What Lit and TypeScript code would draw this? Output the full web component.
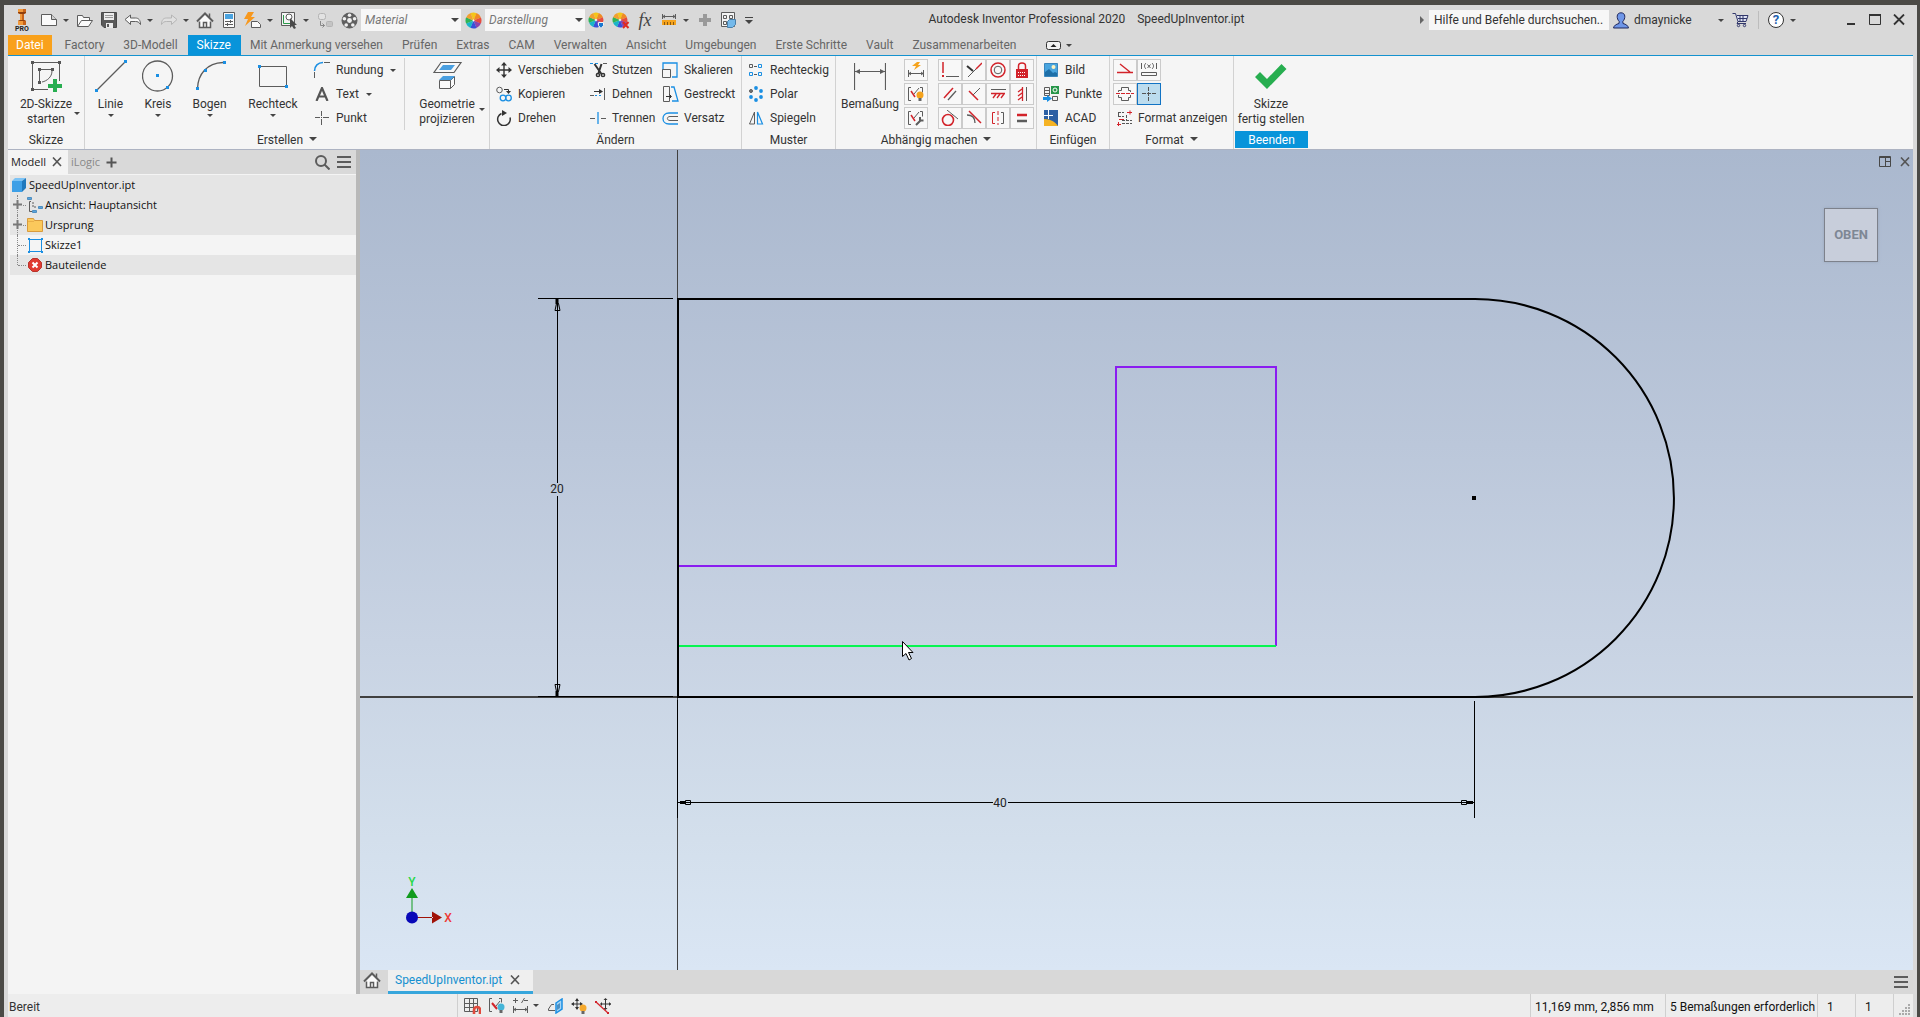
import { LitElement, html, svg, css, SVGTemplateResult, TemplateResult } from "lit";
import { customElement, property } from "lit/decorators.js";
import { classMap } from "lit/directives/class-map.js";

const icon = (w: number, h: number, body: SVGTemplateResult): TemplateResult =>
  html`<svg class="ic" width=${w} height=${h} viewBox="0 0 ${w} ${h}" fill="none" stroke="#5c5c5c" aria-hidden="true">${body}</svg>`;

const dot = (x: number, y: number, c = "#1a8fe3", r = 3) =>
  svg`<rect x=${x} y=${y} width=${r} height=${r} fill=${c} stroke="none"/>`;

const wheel = (cx: number, cy: number, r: number) => {
  const colors = ["#f5c518", "#f08a24", "#e84c3d", "#8e44ad", "#3a50d9", "#19b5c9", "#2fb457", "#f0a030"];
  const n = 8;
  return svg`${colors.map((c, i) => {
    const a = ((i - 2.5) * 2 * Math.PI) / n;
    const b = a + (2 * Math.PI) / n + 0.02;
    return svg`<path stroke="none" fill=${c} d="M${cx} ${cy}L${cx + r * Math.cos(a)} ${cy + r * Math.sin(a)}A${r} ${r} 0 0 1 ${cx + r * Math.cos(b)} ${cy + r * Math.sin(b)}Z"/>`;
  })}<circle cx=${cx} cy=${cy} r="1" fill="#fff" stroke="none"/>`;
};

const bulb = (x: number, y: number, c: string) =>
  svg`<circle cx=${x} cy=${y} r="3.5" fill=${c} stroke="none"/><path stroke="#666" stroke-width="3" d="M${x} ${y + 3}v3"/>`;

const ICONS: Record<string, TemplateResult> = {
  /* quick access */
  logo: html`<svg class="ic" width="16" height="16" viewBox="0 0 16 16" aria-hidden="true"><path fill="#c8641c" d="M4 0h8v4l-2 1v6l2 1v4H4v-4l2-1V5L4 4z"/><path fill="#f29a3c" d="M4 0h5v4l-1 1v6l1 1v4H4v-4l2-1V5L4 4z"/><path fill="#8f3f0c" d="M4 3h8v1l-2 1H6L4 4zM6 11h4l2 1H4z"/></svg>`,
  fresh: icon(18, 14, svg`<path fill="#fafafa" d="M1.500 1.500h10l5 5v6h-15z"/><path fill="#d0d0d0" d="M11.500 1.500v5h5"/>`),
  open: icon(18, 15, svg`<path fill="#fafafa" d="M1.500 13V2.500h5l1 2h6v3"/><path fill="#fafafa" d="M1.500 13.500l4-6h11l-4 6z"/>`),
  save: icon(16, 16, svg`<path fill="#5a5a5a" stroke="#4a4a4a" d="M.5.5h15v15H3L.5 13z"/><path fill="#ececec" stroke="none" d="M3 1h10v7H3zM5 11h7v5H5z"/><path stroke="#999" d="M4 3.500h8M4 5.500h8"/><path fill="#5a5a5a" stroke="none" d="M6 12h2v3H6z"/>`),
  undo: icon(18, 12, svg`<path fill="#f8f8f8" d="M1 5.500L6.500 1v3h5c3 0 5 2 5 6.500-1.500-2.500-3-3-5-3h-5v3z"/>`),
  redo: icon(18, 12, svg`<path fill="#e0e0e0" stroke="#b5b5b5" d="M17 5.500L11.500 1v3h-5c-3 0-5 2-5 6.500 1.500-2.500 3-3 5-3h5v3z"/>`),
  home: icon(18, 17, svg`<path fill="#fafafa" stroke-width="1.500" d="M3.500 7.500v8h11v-8"/><path fill="#fafafa" stroke-width="2" d="M1 9.500L9 1.500l8 8"/><path stroke-width="1.500" d="M13.500 1.500v4M7.500 15.500v-5h3v5"/>`),
  sheet: icon(14, 17, svg`<path fill="#fafafa" d="M1.500.5h11v15h-11z"/><path fill="#4aa3df" stroke="none" d="M3 2h8v5H3z"/><path d="M3 9.500h8M3 12.500h8M8.500 8v3M5.500 11v3"/>`),
  bolt: icon(18, 17, svg`<path fill="#f7981d" stroke="none" d="M4 0h6L7 5h4L1 14l3-7H0z"/><path fill="#fafafa" d="M7.500 9.500h6l3 3v3h-9z"/>`),
  pick: icon(18, 17, svg`<path fill="#f4f4f4" d="M1.500.5h13v13h-13z"/><path stroke="#2b9a4b" d="M3.500 3v8.500H10"/><circle cx="9" cy="5" r="3" fill="#fff"/><path fill="#4a4a4a" stroke="none" d="M10 6v10l2-2 2 3 2-1-2-3h3z"/>`),
  chain: icon(17, 17, svg`<g stroke="#b4b4b4"><rect x="1.500" y="1.500" width="7" height="6" rx="2" fill="#e2e2e2"/><rect x="9.500" y="9.500" width="6" height="5" rx="1" fill="#c4c4c4"/><path stroke="#888" d="M3.500 9v4.500h4M5.500 11.500l2 2-2 2"/></g>`),
  ball: icon(17, 17, svg`<circle cx="8.500" cy="8.500" r="7.500" fill="#606060"/><g stroke="none" fill="#f0f0f0"><circle cx="8.500" cy="8.500" r="2.400"/><circle cx="8.500" cy="3.200" r="1.800"/><circle cx="13.600" cy="6.800" r="1.800"/><circle cx="11.800" cy="13" r="1.800"/><circle cx="5.200" cy="13" r="1.800"/><circle cx="3.400" cy="6.800" r="1.800"/></g>`),
  wheel: icon(17, 17, wheel(8.5, 8.5, 8)),
  wheelPin: icon(18, 17, svg`${wheel(8, 8, 7.5)}<path fill="#1a78d0" stroke="#f0f0f0" d="M10.500 10.500h5v3l-2.500 3-2.500-3z"/>`),
  wheelX: icon(18, 17, svg`${wheel(8, 8, 7.5)}<path stroke="#e02a20" stroke-width="2" d="M11 10l5.500 6M16.500 10L11 16"/>`),
  ruler: icon(16, 13, svg`<path d="M1.500 0v5M14.500 0v5M2 2.500h12M4 1L2 2.500 4 4M12 1l2 1.500L12 4"/><path fill="#f5a31d" stroke="none" d="M1 6h14v5H1z"/><path stroke="#8a5a10" d="M3.500 8v3M6.500 8v3M9.500 8v3M12.500 8v3"/>`),
  plus: icon(14, 14, svg`<path stroke="#9a9a9a" stroke-width="4" d="M7 1v12M1 7h12"/>`),
  board: icon(18, 17, svg`<path fill="#f4f4f4" d="M1.500.5h13v14h-13z"/><path d="M3.500 3.500h3v3h-3zM9.500 3.500h3v3h-3zM3.500 9.500h3v3h-3z"/><path fill="#74b9ea" stroke="#4a7fa8" d="M7.500 9.500l2-2h6v5l-3 3h-5z"/>`),
  user: icon(16, 17, svg`<path fill="#6f96e8" stroke="#20285c" d="M8 .8c-5 0-4.500 6-1.800 8.700L6 11.500c-3 .8-5 2-5.500 4.500h15c-.5-2.500-2.500-3.700-5.500-4.500l-.2-2C12.500 6.800 13 .8 8 .8z"/>`),
  cart: icon(17, 16, svg`<g stroke="#31376b"><path fill="#dfe3f4" d="M.5 1.500h3l2.500 8h8l2-6H5"/><path d="M6 9.500l-1 2h9M6 6.500h9M8 4v5M11 4v5"/><circle cx="6.500" cy="13.500" r="1.200"/><circle cx="12.500" cy="13.500" r="1.200"/></g>`),
  /* window */
  min: icon(14, 14, svg`<path stroke="#333" stroke-width="2" d="M3 11h8"/>`),
  max: icon(14, 14, svg`<path stroke="#333" d="M1.500 1.500h11v10h-11z"/><path stroke="#333" stroke-width="2" d="M1 2h12"/>`),
  close: icon(12, 12, svg`<path stroke="#333" stroke-width="1.800" d="M1 .5l10 10M11 .5L1 10.500"/>`),
  closeS: icon(10, 10, svg`<path stroke="#555" stroke-width="1.600" d="M1 .5l8 8.500M9 .5L1 9"/>`),
  add: icon(11, 11, svg`<path stroke="#555" stroke-width="2" d="M5.500 .5v10M.5 5.500h10"/>`),
  lens: icon(15, 15, svg`<circle cx="6" cy="6" r="5" stroke-width="2"/><path stroke-width="2" d="M9.500 9.500l5 5"/>`),
  burger: icon(14, 12, svg`<path stroke-width="2" d="M0 1h14M0 6h14M0 11h14"/>`),
  layout: icon(12, 11, svg`<path stroke="#484848" d="M.5.500h11v10H.5zM6.500 1v9M7 5.500h4"/><path stroke="#484848" d="M0 1.500h12"/>`),
  collapse: icon(15, 9, svg`<rect x=".5" y=".5" width="14" height="8" rx="2" fill="#f2f2f2" stroke="#333"/><path fill="#222" stroke="none" d="M4.500 6h6l-3-3z"/>`),
  /* large sketch icons, 32px */
  sketch: icon(32, 32, svg`<path d="M2.500 4v25M3 2.500h26M29.500 4v17M4 29.500h14M9.500 11v11M11 9.500h10M22 11c0 6-5 10-10 11"/>${dot(1, 1, "#555")}${dot(28, 1, "#555")}${dot(1, 28, "#555")}${dot(8, 8, "#555")}${dot(21, 8, "#555")}${dot(8, 21, "#555")}<path stroke="#27ae50" stroke-width="4" d="M25 19v14M18 26h14"/>`),
  line: icon(32, 32, svg`<path stroke-width="1.300" d="M2 30L30 2"/>${dot(0, 29)}${dot(29, 0)}`),
  circle: icon(32, 32, svg`<circle cx="15.500" cy="16" r="15" stroke-width="1.300"/>${dot(14, 14)}${dot(24, 26)}`),
  arc: icon(32, 32, svg`<path stroke-width="1.300" d="M3.500 28.500C4 14 13 3 29 2.500"/>${dot(2, 27)}${dot(10, 9)}${dot(29, 1)}`),
  rect: icon(32, 32, svg`<path d="M2.500 6.500h27v20h-27z"/>${dot(1, 5)}${dot(28, 25)}`),
  geometry: icon(32, 32, svg`<path fill="#f8f8f8" stroke-width="1.200" d="M10 2.500h20l-7 10H3z"/><path fill="#4a9fe0" stroke="none" d="M12 5h12l-4 5H8z"/><path fill="#fafafa" d="M8.500 20.500h11v8h-11zM19.500 20.500l4-4v8l-4 4"/><path fill="#4a9fe0" stroke="none" d="M8 20l4-4h12l-4 4z"/>`),
  dimension: icon(32, 32, svg`<path stroke-width="1.200" d="M.5 3v27M31.500 3v27M1 11.500h30"/><path fill="#5c5c5c" stroke="none" d="M1 11.500l5-2.500v5zM31 11.500l-5-2.500v5z"/>`),
  check: icon(32, 32, svg`<path fill="#27ae50" stroke="none" d="M0 17l5-5 7 7L26.500 4l5 5L12 29z"/>`),
  /* small ribbon icons */
  fillet: icon(18, 18, svg`<path d="M1.500 17v-6M11 1.500h6"/><path stroke="#1a8fe3" stroke-width="1.500" d="M1.500 10C1.500 5 5 1.500 10 1.500"/>`),
  text: icon(14, 14, svg`<path stroke="#555" stroke-width="2.200" d="M1.500 14L7 1l5.500 13M3.500 9.500h7"/>`),
  point: icon(14, 14, svg`<path d="M0 6.500h5M8 6.500h6M6.500 0v5M6.500 8v6"/>${dot(6, 6, "#555", 1)}`),
  move: icon(16, 16, svg`<path stroke="#333" stroke-width="1.400" d="M8 2v12M2 8h12"/><path fill="#333" stroke="none" d="M8 0l3 3.500H5zM8 16l3-3.500H5zM0 8l3.500-3v6zM16 8l-3.500-3v6z"/>`),
  copy: icon(16, 16, svg`<circle cx="3.500" cy="4" r="2.800"/><path stroke="#333" d="M8 3.500h4.500V6"/><path fill="#333" stroke="none" d="M10 5h5l-2.500 3z"/><g stroke="#1a8fe3" stroke-width="1.300"><circle cx="7" cy="12" r="2.800"/><circle cx="12.500" cy="12" r="2.800"/></g>`),
  rotate: icon(16, 16, svg`<path stroke="#333" stroke-width="1.500" d="M5.500 3.500A6.300 6.300 0 1 0 14 7.500"/><path fill="#333" stroke="none" d="M6 0l5 3-5 3z"/>`),
  trim: icon(17, 16, svg`<path stroke="#1a8fe3" stroke-dasharray="3 2" d="M0 1.500h8"/><path d="M13 1.500h4"/><path stroke="#333" stroke-width="2" d="M4.500 2l7 10M11.500 2l-3 9"/><circle cx="8" cy="13" r="1.600" stroke="#333" stroke-width="1.500"/><circle cx="13" cy="13" r="1.600" stroke="#333" stroke-width="1.500"/>`),
  extend: icon(16, 14, svg`<path stroke="#333" d="M4 4.500h8"/><path fill="#333" stroke="none" d="M9 2l4 2.500L9 7z"/><path d="M0 8.500h4M14.500 1v12"/><path stroke="#1a8fe3" stroke-dasharray="2 2" d="M5 8.500h8"/>`),
  split: icon(16, 12, svg`<path d="M0 6.500h5M11 6.500h5"/><path stroke="#1a8fe3" stroke-width="1.300" d="M8 0v12"/>`),
  scale: icon(16, 16, svg`<path stroke="#1a8fe3" stroke-width="1.300" d="M1 8V1h14v14H10"/><path d="M.5 7.500h8v8h-8z"/>`),
  stretch: icon(17, 16, svg`<path d="M1.500.5h6v15h-6z"/><path stroke="#333" d="M4 10.500h5M7.500 8.500l2 2-2 2"/><path stroke="#1a8fe3" stroke-width="1.300" d="M9 1h3l4 14h-6"/>`),
  offset: icon(16, 13, svg`<path stroke="#1a8fe3" stroke-width="1.300" d="M16 1H7C-1 1-1 12 7 12h9"/><path d="M16 4.500H8c-3.500 0-3.500 4 0 4h8"/>`),
  rectangular: icon(14, 14, svg`<path d="M.5 1.500h3v3h-3zM5 3.500h3"/><path stroke="#1a8fe3" d="M9.500 1.500h3v3h-3zM.5 9.500h3v3h-3zM9.500 9.500h3v3h-3z"/><path d="M5 11.500h3"/>`),
  polar: icon(16, 16, svg`<g stroke="none" fill="#1a8fe3"><circle cx="8" cy="2" r="1.900"/><circle cx="13" cy="5" r="1.900"/><circle cx="13" cy="11" r="1.900"/><circle cx="8" cy="14" r="1.900"/><circle cx="3" cy="11" r="1.900"/></g><circle cx="3" cy="5" r="1.500" fill="#777"/>`),
  mirror: icon(16, 14, svg`<path d="M6.500 1v12h-5z"/><path stroke="#1a8fe3" stroke-width="1.200" d="M9.500 1v12h5z"/>`),
  image: icon(14, 14, svg`<path fill="#49a5df" stroke="#3a86bd" d="M.5.500h13v13H.5z"/><circle cx="9.500" cy="4" r="2" fill="#fff3c0" stroke="none"/><path fill="#1d6fa8" stroke="none" d="M1 13V9l4-3 4 4 2-1 2 1v3z"/>`),
  points: icon(16, 16, svg`<path fill="#f4f4f4" d="M1.500 1.500h5v8h-5zM2 4.500h4M2 7.500h4M9.500 10.500h5v4h-5z"/><path fill="#27964a" stroke="none" d="M8 0h8v8H8z"/><circle cx="12" cy="4" r="2" stroke="#fff"/><path fill="#1a8fe3" stroke="none" d="M0 11h4V9l5 3.500L4 16v-2H0z"/>`),
  acad: icon(14, 16, svg`<path fill="#2c5fa3" stroke="none" d="M0 0h14v16H0z"/><path fill="#f5b324" stroke="none" d="M0 9c7 0 11 3 14 7H0z"/><path stroke="#fff" d="M4.500 0v9M0 5.500h9"/>`),
  showFormat: icon(16, 16, svg`<path stroke="#555" stroke-dasharray="3 1" d="M1 2.500h6M1 6.500h6M5 10.500h10M5 13.500h10M9.500 5v5M1.500 3v4"/><path stroke="#d2232a" d="M10 2.500h5M13 .5v4M0 14.500h4M1.500 12v4M2 9.500h5"/>`),
  /* bordered tool icons */
  autoDim: icon(18, 16, svg`<path d="M1.500 8v7M16.500 8v7M2 11.500h14M4 10l-2 1.500L4 13M14 10l2 1.500-2 1.500"/><path fill="#f5a31d" stroke="none" d="M10 0h3l-2 3h3l-7 5 2-4H5z"/>`),
  relShow: icon(18, 16, svg`<path d="M4 1.500H1.500v13H4M13 1.500h2.500v5"/><path stroke="#d2232a" stroke-width="1.500" d="M4 5l4 6"/><path d="M7 8l5-6"/>${bulb(13, 9, "#f5a31d")}`),
  relSet: icon(18, 16, svg`<path d="M4 1.500H1.500v13H4M13 1.500h2.500v5"/><path stroke="#d2232a" stroke-width="1.500" d="M4 5l4 6"/><path d="M7 8l5-6"/><path stroke-width="2" d="M9 15l5-5M13 7v3.500h3.500"/>`),
  coincident: icon(18, 16, svg`<path stroke="#d2232a" stroke-width="1.500" d="M2 0v11"/><path d="M5 14.500h13"/>${dot(1, 13, "#d2232a", 2)}`),
  collinear: icon(16, 16, svg`<path stroke="#333" stroke-width="2" d="M1 4l6 5"/><path d="M2 15l8-8"/><path stroke="#d2232a" stroke-width="1.500" d="M10 7l6-6"/>`),
  concentric: icon(16, 16, svg`<circle cx="8" cy="8" r="7" stroke="#d2232a" stroke-width="1.500"/><circle cx="8" cy="8" r="3.800"/>`),
  fix: icon(14, 16, svg`<path stroke="#d2232a" stroke-width="1.500" d="M3.500 7V4c0-4 7-4 7 0v3"/><path fill="#d2232a" stroke="none" d="M1 7h12v9H1z"/><path stroke="#fff" stroke-dasharray="1 1" d="M3 10.500h8M3 13.500h8"/>`),
  parallel: icon(14, 14, svg`<path stroke="#d2232a" stroke-width="1.500" d="M1 11l9-10"/><path stroke-width="1.300" d="M5 13l8-9"/>`),
  perpendicular: icon(14, 14, svg`<path stroke="#d2232a" stroke-width="1.500" d="M2 4l9 9"/><path d="M6 8l7-7"/>`),
  horizontal: icon(16, 12, svg`<path d="M1 1.500h15"/><path stroke="#d2232a" stroke-width="1.300" d="M1 5.500h14M6 6l-3 4M10 6l-3 4M14 6l-3 4"/>`),
  vertical: icon(12, 16, svg`<path d="M10.500 1v14"/><path stroke="#d2232a" stroke-width="1.300" d="M6.500 1v14M6 3L2 6M6 7l-4 3M6 11l-4 3"/>`),
  tangent: icon(18, 16, svg`<circle cx="7" cy="10" r="5.500" stroke="#d2232a" stroke-width="1.600"/><path d="M6 0l11 9"/>`),
  smooth: icon(18, 16, svg`<path stroke="#d2232a" stroke-width="1.500" d="M4 1l12 12"/><path stroke-width="1.300" d="M2 5c6 0 8 3 8 8"/>`),
  symmetric: icon(14, 14, svg`<path stroke="#d2232a" d="M4 1.500H1.500v11H4"/><path d="M10 1.500h2.500v11H10"/><path stroke="#d2232a" stroke-dasharray="4 2" d="M7 0v14"/>`),
  equal: icon(14, 14, svg`<path stroke="#d2232a" stroke-width="2.500" d="M2 4h10"/><path stroke-width="2.500" d="M2 10h10"/>`),
  construct: icon(18, 14, svg`<path stroke="#d2232a" stroke-width="1.400" d="M1 9.500h16M4 1l10 8"/>`),
  driven: icon(18, 16, svg`<path d="M1.500 1v6M16.500 1v6M1.500 10.500h15v3h-15zM6 1c-2 2-2 4 0 6M12 1c2 2 2 4 0 6M7.500 2.500l3 3.500M10.500 2.500l-3 3.500"/>`),
  centerline: icon(18, 16, svg`<path d="M2.500 6V4.500h3v-3h7v3h2V6M2.500 9v2.500h3v3h7v-3h2V9"/><path stroke="#d2232a" stroke-dasharray="4 1" d="M0 7.500h18"/>`),
  centerpoint: icon(14, 14, svg`<path stroke="#555" stroke-dasharray="4 1" d="M0 6.500h14M6.500 0v14"/>`),
  /* browser tree */
  part: icon(14, 14, svg`<path fill="#3d9fe6" stroke="none" d="M0 3h10v11H0z"/><path fill="#7cc3f5" stroke="none" d="M0 3l3-3h11l-4 3z"/><path fill="#2079bd" stroke="none" d="M10 3l4-3v10l-4 4z"/>`),
  view: icon(16, 16, svg`<g fill="#5aa5de" stroke="#3a80b8" stroke-width=".8"><path d="M.5.500h4v2h-4zM11.500 9.500h4v2h-4zM5.500 13.500h4v2h-4z"/></g><path d="M4 4.500H2.500v10H5" /><path stroke-dasharray="2 1" d="M6 5v5h4"/>`),
  folder: icon(16, 14, svg`<path fill="#fbc95c" stroke="#d99b3c" d="M.5.500h6l1 2h8v11H.5z"/><path stroke="#e9b04a" d="M1 3.500h6"/>`),
  skizze: icon(15, 15, svg`<path stroke="#1a8fe3" d="M1.500 1.500h12v12h-12z"/>${dot(0, 0, "#1a8fe3", 2)}${dot(13, 0, "#1a8fe3", 2)}${dot(0, 13, "#1a8fe3", 2)}${dot(13, 13, "#1a8fe3", 2)}`),
  end: icon(14, 14, svg`<path fill="#e03a30" stroke="#b8352c" d="M4.500.500h5l4 4v5l-4 4h-5l-4-4v-5z"/><path stroke="#fff" stroke-width="2" d="M4.500 4.500l5 5M9.500 4.500l-5 5"/>`),
  expander: icon(9, 9, svg`<path stroke="#777" stroke-width="2" d="M4.500 0v9M0 4.500h9"/>`),
  /* status bar */
  gridSnap: icon(17, 16, svg`<path d="M.5.500h13v13H.5zM5.500 0v14M9.500 0v14M0 5.500h14M0 9.500h14"/><path stroke="#e04a3c" stroke-width="2.600" d="M10 16v-4c0-4 6-4 6 0v4"/>`),
  relStat: icon(17, 16, svg`<path d="M4 .5H1.500v13H4M11 .5h2.500v4"/><path stroke="#d2232a" stroke-width="2" d="M4 5l5 6"/><path d="M8 8l4-5"/>${bulb(13, 9, "#45b5d8")}`),
  tolerance: icon(17, 16, svg`<path d="M1 2.500h5M3.500 0v5M9.500 5l3-5M12 2.500h4M1.500 8v7M15.500 8v7M2 11.500h13M4 10l-2 1.500L4 13M13 10l2 1.500-2 1.500"/>`),
  slice: icon(17, 16, svg`<path d="M7 6.500H4.500L1.500 11v1.500H8"/><path fill="#a5d4f5" stroke="#1a8fe3" stroke-width="1.500" d="M9 5l6-4v10l-6 4z"/><path fill="#4d8fc0" stroke="none" d="M10 7l3-2v5l-3 2z"/>`),
  freedom: icon(17, 16, svg`<path stroke="#333" d="M6 1v10M1 6h10"/><path fill="#333" stroke="none" d="M6 0l2 3H4zM6 12l2-3H4zM0 6l3-2v4zM12 6L9 4v4z"/>${bulb(12, 10, "#f5a92d")}`),
  relax: icon(17, 16, svg`<path stroke="#333" d="M10.500 1v10M6 6h10"/><path fill="#333" stroke="none" d="M10.500 0l2 2h-4zM10.500 12l2-2h-4zM5 6l2-2v4zM16 6l-2-2v4z"/><path stroke="#d2232a" stroke-width="1.300" d="M1 4l12 11"/>${dot(0, 3, "#d2232a", 2)}${dot(12, 14, "#d2232a", 2)}`),
  grip: icon(12, 12, svg`<g fill="#aaa" stroke="none"><path d="M9 0h2v2H9zM9 3h2v2H9zM9 6h2v2H9zM9 9h2v2H9zM6 3h2v2H6zM6 6h2v2H6zM6 9h2v2H6zM3 6h2v2H3zM3 9h2v2H3zM0 9h2v2H0z"/></g>`),
};

const base = css`
  :host { display: block; font-family: Roboto, "Noto Sans", sans-serif; font-size: 12px; line-height: 16px; color: #333; }
  *, *::before, *::after { box-sizing: border-box; }
  button, select, input { font: inherit; color: inherit; border: 0; background: none; padding: 0; margin: 0; border-radius: 0; white-space: nowrap; }
  .ic { display: block; flex: none; }
  .caret { display: block; flex: none; width: 0; height: 0; border: 3px solid transparent; border-top-color: #444; border-bottom-width: 0; }
  .caret.big { border-width: 4px; border-bottom-width: 0; }
  .tool { display: flex; align-items: center; justify-content: center; flex: none; }
`;

@customElement("title-bar")
class TitleBar extends LitElement {
  static styles = [base, css`
    .bar { display: flex; align-items: center; height: 30px; padding: 0 2px; background: #d9d9d9; }
    .quick, .right { display: flex; align-items: center; flex: none; }
    .tool { width: 24px; height: 28px; }
    .tool.drop { width: 10px; margin-right: 2px; }
    .logo { flex-direction: column; margin-right: 3px; font-size: 7px; line-height: 6px; font-weight: 700; color: #222; gap: 1px; }
    .fx { font: italic 18px "Liberation Serif", serif; color: #444; }
    .combo { position: relative; width: 100px; height: 22px; }
    .combo select { appearance: none; width: 100%; height: 100%; padding: 0 18px 0 4px; background: #f7f7f7; font-style: italic; color: #777; }
    .combo .caret { position: absolute; right: 2px; top: 9px; pointer-events: none; }
    .title { flex: 1; display: flex; justify-content: center; gap: 12px; padding: 0 4px 2px 0; white-space: nowrap; }
    .menu { flex-direction: column; gap: 2px; }
    .tool.menu { width: 16px; }
    .menu::before { content: ""; width: 8px; height: 1px; background: #444; }
    .arrow { width: 0; height: 0; border: 4px solid transparent; border-left-color: #666; border-right-width: 0; margin-right: 5px; }
    .search { width: 180px; height: 20px; padding: 0 5px; background: #f7f7f7; color: #333; }
    .search::placeholder { color: #333; opacity: 1; }
    .user { display: flex; align-items: center; gap: 5px; width: 103px; margin-left: 4px; }
    .sep { width: 1px; height: 18px; background: #bdbdbd; margin: 0 5px 0 6px; }
    .help span { width: 16px; height: 16px; border: 1px solid #333; border-radius: 50%; background: #fff; color: #1f5fae; font-weight: 700; font-size: 13px; line-height: 14px; }
    .first { margin-left: 39px; }
  `];
  private tool(name: string, label: string) {
    return html`<button class="tool" aria-label=${label}>${ICONS[name]}</button>`;
  }
  private drop(label: string) {
    return html`<button class="tool drop" aria-label=${label}><span class="caret"></span></button>`;
  }
  render() {
    return html`<header class="bar">
      <div class="quick">
        <button class="tool logo" aria-label="Anwendungsmenü">${ICONS.logo}<span>PRO</span></button>
        ${this.tool("fresh", "Neu")}${this.drop("Neu Optionen")}
        ${this.tool("open", "Öffnen")}${this.tool("save", "Speichern")}
        ${this.tool("undo", "Rückgängig")}${this.drop("Rückgängig Liste")}
        ${this.tool("redo", "Wiederherstellen")}${this.drop("Wiederherstellen Liste")}
        ${this.tool("home", "Startseite")}${this.tool("sheet", "iProperties")}
        ${this.tool("bolt", "Aktualisieren")}${this.drop("Aktualisieren Optionen")}
        ${this.tool("pick", "Auswahl")}${this.drop("Auswahl Optionen")}
        ${this.tool("chain", "Verknüpfung")}${this.tool("ball", "Materialbrowser")}
        <label class="combo"><select aria-label="Material"><option>Material</option></select><span class="caret big"></span></label>
        ${this.tool("wheel", "Farbrad")}
        <label class="combo"><select aria-label="Darstellung"><option>Darstellung</option></select><span class="caret big"></span></label>
        ${this.tool("wheelPin", "Anpassen")}${this.tool("wheelX", "Löschen")}
        <button class="tool fx" aria-label="Parameter">fx</button>
        ${this.tool("ruler", "Messen")}${this.drop("Messen Optionen")}
        ${this.tool("plus", "Hinzufügen")}${this.tool("board", "Katalog")}
        <button class="tool menu" aria-label="Schnellzugriff anpassen"><span class="caret big"></span></button>
      </div>
      <div class="title"><span>Autodesk Inventor Professional 2020</span><span>SpeedUpInventor.ipt</span></div>
      <div class="right">
        <span class="arrow"></span>
        <input class="search" aria-label="Suche" placeholder="Hilfe und Befehle durchsuchen.." />
        <button class="user">${ICONS.user}<span>dmaynicke</span></button>
        ${this.drop("Konto")}
        ${this.tool("cart", "App Store")}
        <span class="sep"></span>
        <button class="tool help" aria-label="Hilfe"><span>?</span></button>
        ${this.drop("Hilfe Optionen")}
        <button class="tool first" aria-label="Minimieren">${ICONS.min}</button>
        <button class="tool" aria-label="Maximieren">${ICONS.max}</button>
        <button class="tool" aria-label="Schließen">${ICONS.close}</button>
      </div>
    </header>`;
  }
}

@customElement("ribbon-tabs")
class RibbonTabs extends LitElement {
  static styles = [base, css`
    .tabs { display: flex; align-items: stretch; height: 21px; background: #d9d9d9; border-bottom: 1px solid #1492cf; }
    .tab { padding: 0 10px 0 9px; color: #666; line-height: 20px; }
    .file { padding: 0 8px; margin-right: 4px; background: #f9a11b; color: #fff; }
    .active { background: #0894da; color: #fff; }
    .tool { gap: 5px; margin-left: 20px; }
  `];
  render() {
    const tabs = ["Datei", "Factory", "3D-Modell", "Skizze", "Mit Anmerkung versehen", "Prüfen", "Extras", "CAM", "Verwalten", "Ansicht", "Umgebungen", "Erste Schritte", "Vault", "Zusammenarbeiten"];
    return html`<nav class="tabs" role="tablist">
      ${tabs.map((t) => html`<button role="tab" aria-selected=${t === "Skizze"} class=${classMap({ tab: true, file: t === "Datei", active: t === "Skizze" })}>${t}</button>`)}
      <button class="tool" aria-label="Ribbon minimieren">${ICONS.collapse}<span class="caret"></span></button>
    </nav>`;
  }
}

@customElement("ribbon-panel")
class RibbonPanel extends LitElement {
  static styles = [base, css`
    .ribbon { display: flex; height: 94px; background: #f5f5f5; border-bottom: 1px solid #adb3c2; }
    .group { display: flex; flex-direction: column; flex: none; border-right: 1px solid #d2d2d2; }
    .group:last-child { border-right: 0; }
    .body { display: flex; flex: 1; padding-top: 2px; }
    .name { display: flex; align-items: center; justify-content: center; gap: 6px; height: 17px; margin-bottom: 1px; }
    .w1 { width: 77px; } .w2 { width: 405px; } .w3 { width: 252px; } .w4 { width: 94px; }
    .w5 { width: 201px; } .w6 { width: 73px; } .w7 { width: 124px; } .w8 { width: 75px; }
    .w2 .body { padding-left: 1px; }
    .w8 .name { background: #0894da; color: #fff; margin-left: 1px; margin-right: 1px; }
    .big { display: flex; flex-direction: column; align-items: center; padding-top: 2px; flex: none; line-height: 15px; }
    .big .label { margin-top: 5px; }
    .big .caret { margin-top: 2px; }
    .two { position: relative; }
    .two .caret { position: absolute; right: 4px; bottom: 16px; }
    .b77 { width: 76px; } .b49 { width: 49px; } .b46 { width: 46px; } .b57 { width: 57px; } .b70 { width: 70px; }
    .b83 { width: 84px; } .b74 { width: 74px; } .b68 { width: 68px; }
    .col { display: flex; flex-direction: column; flex: none; }
    .geo { margin-left: auto; border-left: 1px solid #d2d2d2; height: 72px; }
    .row { display: flex; align-items: center; gap: 4px; height: 24px; padding-left: 4px; }
    .row .slot { display: flex; justify-content: center; width: 20px; flex: none; }
    .row .caret { margin-left: 3px; }
    .c95 { width: 94px; } .c72 { width: 72px; }
    .grid { display: grid; grid-auto-rows: 22px; row-gap: 2px; padding-top: 1px; }
    .grid button { display: flex; align-items: center; justify-content: center; border: 1px solid #cbcbcb; background: #f8f8f8; }
    .g1 { grid-template-columns: 24px; margin-right: 10px; }
    .g2 { grid-template-columns: repeat(2, 24px); padding-left: 3px; }
    .g4 { grid-template-columns: repeat(4, 24px); }
    .grid button.on { background: #bcdcee; border-color: #1173c4; }
    .wide { padding-left: 5px; gap: 3px; margin-top: 1px; }
  `];
  private big(cls: string, name: string, label: string, caret = true) {
    return html`<button class="big ${cls}">${ICONS[name]}<span class="label">${label}</span>${caret ? html`<span class="caret"></span>` : null}</button>`;
  }
  private big2(cls: string, name: string, a: string, b: string, caret = true) {
    return html`<button class="big two ${cls}">${ICONS[name]}<span class="label">${a}<br />${b}</span>${caret ? html`<span class="caret"></span>` : null}</button>`;
  }
  private row(name: string, label: string, caret = false) {
    return html`<button class="row"><span class="slot">${ICONS[name]}</span><span>${label}</span>${caret ? html`<span class="caret"></span>` : null}</button>`;
  }
  private name(label: string, caret = false) {
    return html`<div class="name"><span>${label}</span>${caret ? html`<span class="caret big"></span>` : null}</div>`;
  }
  private cells(list: [string, string][], on = "") {
    return list.map(([n, l]) => html`<button aria-label=${l} class=${classMap({ on: n === on })}>${ICONS[n]}</button>`);
  }
  render() {
    return html`<div class="ribbon">
      <section class="group w1"><div class="body">${this.big2("b77", "sketch", "2D-Skizze", "starten")}</div>${this.name("Skizze")}</section>
      <section class="group w2"><div class="body">
        ${this.big("b49", "line", "Linie")}${this.big("b46", "circle", "Kreis")}${this.big("b57", "arc", "Bogen")}${this.big("b70", "rect", "Rechteck")}
        <div class="col">${this.row("fillet", "Rundung", true)}${this.row("text", "Text", true)}${this.row("point", "Punkt")}</div>
        <div class="geo">${this.big2("b83", "geometry", "Geometrie", "projizieren")}</div>
      </div>${this.name("Erstellen", true)}</section>
      <section class="group w3"><div class="body">
        <div class="col c95">${this.row("move", "Verschieben")}${this.row("copy", "Kopieren")}${this.row("rotate", "Drehen")}</div>
        <div class="col c72">${this.row("trim", "Stutzen")}${this.row("extend", "Dehnen")}${this.row("split", "Trennen")}</div>
        <div class="col">${this.row("scale", "Skalieren")}${this.row("stretch", "Gestreckt")}${this.row("offset", "Versatz")}</div>
      </div>${this.name("Ändern")}</section>
      <section class="group w4"><div class="body">
        <div class="col">${this.row("rectangular", "Rechteckig")}${this.row("polar", "Polar")}${this.row("mirror", "Spiegeln")}</div>
      </div>${this.name("Muster")}</section>
      <section class="group w5"><div class="body">
        ${this.big("b68", "dimension", "Bemaßung", false)}
        <div class="grid g1">${this.cells([["autoDim", "Automatische Bemaßung"], ["relShow", "Abhängigkeiten anzeigen"], ["relSet", "Abhängigkeitseinstellungen"]])}</div>
        <div class="grid g4">${this.cells([
          ["coincident", "Koinzident"], ["collinear", "Kollinear"], ["concentric", "Konzentrisch"], ["fix", "Fest"],
          ["parallel", "Parallel"], ["perpendicular", "Lotrecht"], ["horizontal", "Horizontal"], ["vertical", "Vertikal"],
          ["tangent", "Tangential"], ["smooth", "Stetig"], ["symmetric", "Symmetrisch"], ["equal", "Gleich"],
        ])}</div>
      </div>${this.name("Abhängig machen", true)}</section>
      <section class="group w6"><div class="body">
        <div class="col">${this.row("image", "Bild")}${this.row("points", "Punkte")}${this.row("acad", "ACAD")}</div>
      </div>${this.name("Einfügen")}</section>
      <section class="group w7"><div class="body"><div class="col">
        <div class="grid g2">${this.cells([["construct", "Konstruktion"], ["driven", "Getriebene Bemaßung"], ["centerline", "Mittellinie"], ["centerpoint", "Mittelpunkt"]], "centerpoint")}</div>
        <button class="row wide"><span class="slot">${ICONS.showFormat}</span><span>Format anzeigen</span></button>
      </div></div>${this.name("Format", true)}</section>
      <section class="group w8"><div class="body">${this.big2("b74", "check", "Skizze", "fertig stellen", false)}</div>${this.name("Beenden")}</section>
    </div>`;
  }
}

@customElement("model-browser")
class ModelBrowser extends LitElement {
  static styles = [base, css`
    :host { background: #f4f4f4; color: #111; font-family: "Open Sans", "Noto Sans", sans-serif; font-size: 11px; }
    .strip { display: flex; align-items: stretch; height: 24px; background: #d9d9d9; }
    .tab { display: flex; align-items: center; gap: 6px; padding: 0 6px 0 3px; background: #f4f4f4; color: #222; }
    .off { background: none; color: #888; padding: 0 0 0 3px; }
    .strip .tool { width: 22px; }
    .tail { margin-left: auto; padding-right: 5px; display: flex; gap: 7px; align-items: center; }
    ul { list-style: none; margin: 1px 0 0 2px; padding: 0; }
    li { display: flex; align-items: center; height: 20px; background: #e5e5e5; }
    li.light { background: none; }
    .root { padding-left: 2px; gap: 3px; }
    .twig { width: 16px; height: 20px; flex: none; position: relative; }
    .twig::before { content: ""; position: absolute; left: 7px; top: 0; height: 20px; border-left: 1px dotted #888; }
    .twig::after { content: ""; position: absolute; left: 8px; top: 10px; width: 8px; border-top: 1px dotted #888; }
    .last .twig::before { height: 10px; }
    .twig .ic { position: absolute; left: 3px; top: 5px; z-index: 1; background: #e5e5e5; }
    .slot { display: flex; justify-content: center; width: 18px; flex: none; }
    .kid span:last-child { padding-left: 1px; }
  `];
  render() {
    const kids: [string, string, boolean][] = [["view", "Ansicht: Hauptansicht", true], ["folder", "Ursprung", true], ["skizze", "Skizze1", false], ["end", "Bauteilende", false]];
    return html`<div class="strip">
        <button class="tab"><span>Modell</span>${ICONS.closeS}</button>
        <button class="tab off"><span>iLogic</span></button>
        <button class="tool" aria-label="Browser hinzufügen">${ICONS.add}</button>
        <div class="tail"><button aria-label="Suchen">${ICONS.lens}</button><button aria-label="Menü">${ICONS.burger}</button></div>
      </div>
      <ul role="tree">
        <li class="root" role="treeitem">${ICONS.part}<span>SpeedUpInventor.ipt</span></li>
        ${kids.map(([i, t, open], n) => html`<li role="treeitem" class=${classMap({ kid: true, light: i === "skizze", last: n === kids.length - 1 })}>
          <span class="twig">${open ? ICONS.expander : null}</span><span class="slot">${ICONS[i]}</span><span>${t}</span></li>`)}
      </ul>`;
  }
}

@customElement("sketch-canvas")
class SketchCanvas extends LitElement {
  static styles = [base, css`
    :host { position: relative; overflow: hidden; background: linear-gradient(#aab8ce, #bbc7da 36%, #c8d3e3 60%, #d3dfec 84%, #dae6f4); }
    .view { position: absolute; inset: 0; width: 100%; height: 100%; overflow: visible; }
    .dim { font-size: 12px; fill: #222; stroke: none; text-anchor: middle; }
    .axis { font-size: 12px; font-weight: 500; stroke: none; text-anchor: middle; }
    .tools { position: absolute; top: 6px; right: 3px; display: flex; align-items: center; gap: 9px; }
    .cube { position: absolute; top: 58px; right: 35px; width: 54px; height: 54px; background: #c8cedb; border: 1px solid #7d818b; color: #7e8794; font-weight: 700; font-size: 13px; text-align: center; box-shadow: 0 0 3px #9aa7bb; }
  `];
  render() {
    return html`<svg class="view" viewBox="360 150 1553 820" fill="none" stroke="#000" role="img" aria-label="Skizze1">
        <g stroke="#404040"><path d="M677.500 -2000V4000"/><path stroke-width="2" d="M-3000 697H5000"/></g>
        <path d="M538 298.500H673M538 696.500H673M557.500 299V483M557.500 496V697M677.500 700V818M1474.500 701V818M678 802.500H993M1008 802.500H1474"/>
        <g><path stroke-width="3" d="M557 299v5M557 691v5M680 802.500h6M1467 802.500h6"/>
        <path d="M556.500 303.500h2l1.500 7h-5zM556.500 691.500h2l1.500-7h-5zM685.500 800.500h5v4h-5zM1461.500 800.500h5v4h-5z"/></g>
        <path stroke-width="2" d="M1475 299H678V697H1475A199 199 0 0 0 1475 299Z"/>
        <path fill="#000" stroke="none" d="M1472 496h4v4h-4z"/>
        <path stroke="#8a1cf0" stroke-width="2" d="M679 566H1116V367H1276V646"/>
        <path stroke="#06f550" stroke-width="2" d="M679 646H1276"/>
        <text class="dim" x="557" y="493">20</text><text class="dim" x="1000" y="807">40</text>
        <path fill="#fff" d="M902.500 641.500v15l3.500-3 3 6.500 2.500-1.500-3-6h4.500z"/>
        <g stroke="none"><path fill="#119b1e" d="M412 888l6 10h-12zM411.500 897h1v16h-1z"/><path fill="#a01208" d="M442 917.500l-10-6v12zM416 917h17v1h-17z"/><circle cx="412" cy="917.500" r="6" fill="#0808b8"/></g>
        <text class="axis" x="412" y="886" fill="#28d848">Y</text><text class="axis" x="448" y="922" fill="#ee3a34">X</text>
      </svg>
      <div class="tools"><button aria-label="Anordnen">${ICONS.layout}</button><button aria-label="Dokument schließen">${ICONS.closeS}</button></div>
      <button class="cube">OBEN</button>`;
  }
}

@customElement("status-line")
class StatusLine extends LitElement {
  @property() message = "";
  static styles = [base, css`
    .bar { display: flex; align-items: stretch; height: 23px; background: #ededed; color: #111; }
    .msg { width: 449px; padding: 5px 0 0 1px; color: #333; flex: none; }
    .tools { display: flex; align-items: center; padding-left: 2px; border-left: 1px solid #cfcfcf; }
    .tool { width: 24px; }
    .tool.drop { width: 8px; margin-right: 3px; }
    .cells { display: flex; margin-left: auto; }
    .cell { padding: 5px 0 0 4px; border-left: 1px solid #cfcfcf; white-space: nowrap; }
    .pos { width: 135px; } .need { width: 152px; } .num { width: 38px; padding-left: 9px; }
    .grip { width: 20px; display: flex; align-items: flex-end; justify-content: flex-end; padding: 0 2px 1px 0; }
  `];
  render() {
    return html`<footer class="bar">
      <div class="msg">${this.message}</div>
      <div class="tools">
        <button class="tool" aria-label="Raster fangen">${ICONS.gridSnap}</button>
        <button class="tool" aria-label="Abhängigkeiten">${ICONS.relStat}</button>
        <button class="tool" aria-label="Toleranz">${ICONS.tolerance}</button>
        <button class="tool drop" aria-label="Toleranz Optionen"><span class="caret"></span></button>
        <button class="tool" aria-label="Schnitt">${ICONS.slice}</button>
        <button class="tool" aria-label="Freiheitsgrade">${ICONS.freedom}</button>
        <button class="tool" aria-label="Lockerungsmodus">${ICONS.relax}</button>
      </div>
      <div class="cells">
        <div class="cell pos">11,169 mm, 2,856 mm</div><div class="cell need">5 Bemaßungen erforderlich</div>
        <div class="cell num">1</div><div class="cell num">1</div>
        <div class="cell grip">${ICONS.grip}</div>
      </div>
    </footer>`;
  }
}

@customElement("app-root")
class AppRoot extends LitElement {
  static styles = [base, css`
    .window { display: flex; flex-direction: column; height: 100vh; border: solid #4b4a46; border-width: 5px 3px 0 4px; background: #d9d9d9; padding: 0 4px; overflow: hidden; }
    .work { display: flex; flex: 1; min-height: 0; }
    .side { flex: none; width: 348px; }
    .split { flex: none; width: 4px; background: #b9b9b9; }
    .doc { flex: 1; min-width: 0; display: flex; flex-direction: column; }
    .canvas { flex: 1; min-height: 0; }
    .docs { display: flex; align-items: stretch; height: 24px; background: #d8d8d8; padding-right: 5px; }
    .home { width: 28px; padding: 0 4px 3px 0; }
    .doctab { display: flex; align-items: center; gap: 8px; width: 145px; padding: 0 7px 1px; background: #efefef; border-bottom: 3px solid #37a6dc; color: #168fd0; }
    .docs .menu { margin-left: auto; }
  `];
  render() {
    return html`<div class="window">
      <title-bar></title-bar>
      <ribbon-tabs></ribbon-tabs>
      <ribbon-panel></ribbon-panel>
      <main class="work">
        <model-browser class="side"></model-browser>
        <div class="split"></div>
        <section class="doc">
          <sketch-canvas class="canvas"></sketch-canvas>
          <div class="docs">
            <button class="tool home" aria-label="Startseite">${ICONS.home}</button>
            <button class="doctab"><span>SpeedUpInventor.ipt</span>${ICONS.closeS}</button>
            <button class="tool menu" aria-label="Dokumentliste">${ICONS.burger}</button>
          </div>
        </section>
      </main>
      <status-line message="Bereit"></status-line>
    </div>`;
  }
}
